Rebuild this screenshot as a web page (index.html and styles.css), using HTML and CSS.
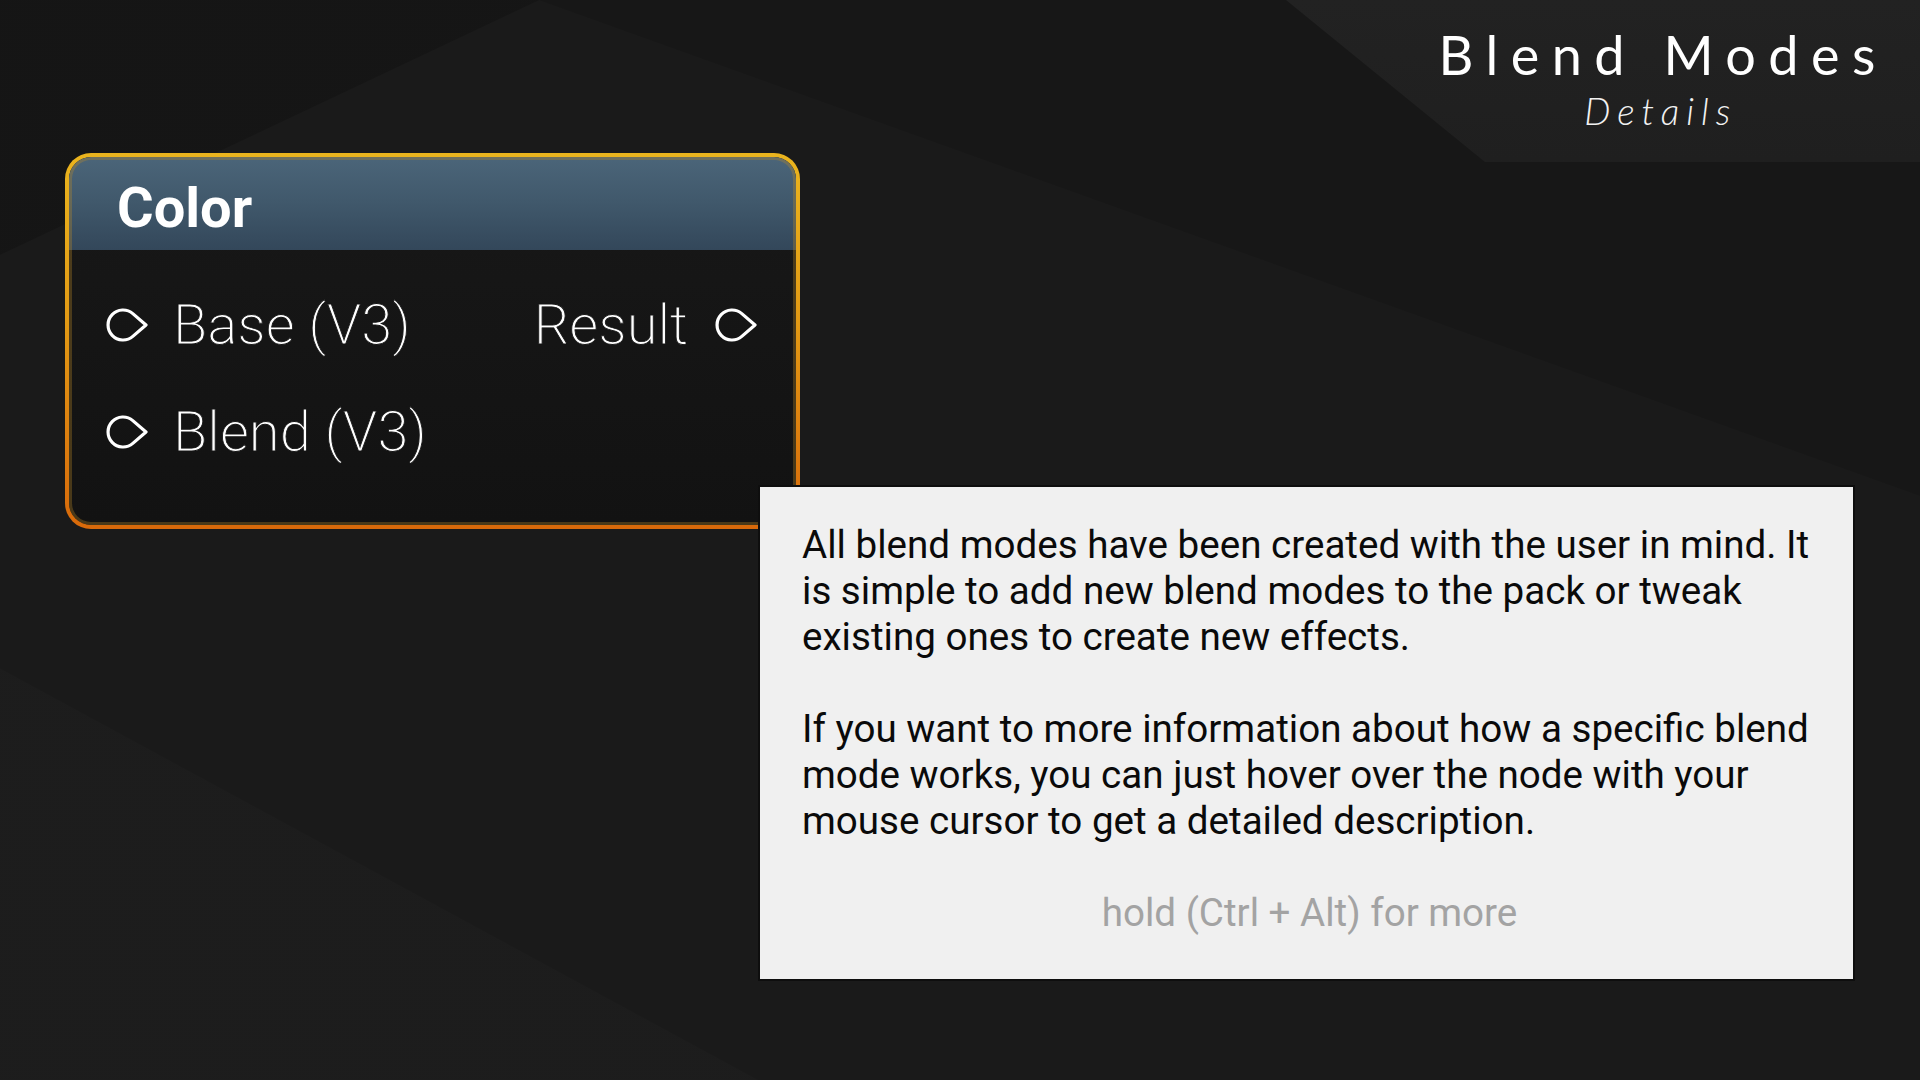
FILE: index.html
```html
<!DOCTYPE html>
<html lang="en">
<head>
<meta charset="utf-8">
<title>Blend Modes - Details</title>
<link rel="stylesheet" href="styles.css">
</head>
<body>
<div class="screen">
  <header class="title-block">
    <h1 class="title">Blend Modes</h1>
    <div class="subtitle">Details</div>
  </header>

  <div class="node">
    <div class="node-header">Color</div>
    <div class="node-body">
      <div class="row">
        <div class="port port-in">
          <svg class="port-icon" viewBox="0 0 42 34" width="42" height="34"><path d="M26.8 5.6 L40 17 L26.8 28.4 A15 15 0 1 1 26.8 5.6 Z"/></svg>
          <span class="port-label">Base (V3)</span>
        </div>
        <div class="port port-out">
          <span class="port-label">Result</span>
          <svg class="port-icon" viewBox="0 0 42 34" width="42" height="34"><path d="M26.8 5.6 L40 17 L26.8 28.4 A15 15 0 1 1 26.8 5.6 Z"/></svg>
        </div>
      </div>
      <div class="row">
        <div class="port port-in">
          <svg class="port-icon" viewBox="0 0 42 34" width="42" height="34"><path d="M26.8 5.6 L40 17 L26.8 28.4 A15 15 0 1 1 26.8 5.6 Z"/></svg>
          <span class="port-label">Blend (V3)</span>
        </div>
      </div>
    </div>
  </div>

  <div class="tooltip">
    <p class="tip-text">All blend modes have been created with the user in mind. It is simple to add new blend modes to the pack or tweak existing ones to create new effects.</p>
    <p class="tip-text">If you want to more information about how a specific blend mode works, you can just hover over the node with your mouse cursor to get a detailed description.</p>
    <p class="tip-hint">hold (Ctrl + Alt) for more</p>
  </div>
</div>
</body>
</html>
```

FILE: styles.css
```css
html, body {
  margin: 0;
  padding: 0;
}

body {
  width: 1920px;
  height: 1080px;
  overflow: hidden;
  background: #1a1a1a;
  font-family: Roboto, "Noto Sans", sans-serif;
}

.screen {
  position: relative;
  width: 1920px;
  height: 1080px;
  display: flex;
  flex-direction: column;
  background:
    linear-gradient(154.7deg, rgba(0,0,0,0.18) 0px, rgba(0,0,0,0.18) 230px, rgba(0,0,0,0) 231px),
    linear-gradient(19.75deg, rgba(0,0,0,0) 0px, rgba(0,0,0,0) 1198px, rgba(0,0,0,0.12) 1199px),
    linear-gradient(208.5deg, rgba(255,255,255,0) 0px, rgba(255,255,255,0) 1503px, rgba(255,255,255,0.012) 1504px),
    #1a1a1a;
  overflow: hidden;
}

.screen::before {
  content: "";
  position: absolute;
  top: 0;
  left: 1286px;
  width: 634px;
  height: 162px;
  background: linear-gradient(180deg, #222222, #1f1f1f);
  clip-path: polygon(0 0, 100% 0, 100% 100%, 199px 100%);
}

/* Title */
.title-block {
  position: relative;
  align-self: flex-end;
  margin-right: 44px;
  padding-top: 28px;
  display: flex;
  flex-direction: column;
  align-items: center;
  color: #ffffff;
  font-family: Lato, "Open Sans", sans-serif;
}

.title {
  margin: 0 -12px 0 0;
  font-size: 54px;
  line-height: 54px;
  font-weight: 400;
  letter-spacing: 12.5px;
}

.subtitle {
  margin: 10px -7px 0 0;
  font-size: 37px;
  line-height: 38px;
  font-style: italic;
  font-weight: 300;
  letter-spacing: 7px;
  color: #f2f2f2;
}

/* Node */
.node {
  margin: 23px 0 0 65px;
  width: 735px;
  height: 376px;
  box-sizing: border-box;
  border: 4px solid transparent;
  border-radius: 26px;
  background:
    linear-gradient(180deg, #181818, #121212) padding-box,
    linear-gradient(180deg, #eab41e 0%, #e39a14 45%, #d8690a 100%) border-box;
  display: flex;
  flex-direction: column;
  overflow: hidden;
  position: relative;
}

.node::after {
  content: "";
  position: absolute;
  inset: 0;
  border-radius: 22px;
  box-shadow: inset 0 0 0 3px rgba(190, 140, 40, 0.32);
  pointer-events: none;
}

.node-header {
  height: 93px;
  box-sizing: border-box;
  padding: 18px 0 0 48px;
  background: linear-gradient(180deg, #4b6579 0%, #40586b 50%, #33475a 100%);
  color: #ffffff;
  font-family: Roboto, sans-serif;
  font-weight: 700;
  font-size: 56px;
  line-height: normal;
}

.node-body {
  flex: 1;
  padding: 43px 39px 0 37px;
  display: flex;
  flex-direction: column;
  gap: 43px;
}

.row {
  display: flex;
  justify-content: space-between;
  align-items: center;
  height: 64px;
}

.port {
  display: flex;
  align-items: center;
  color: #ffffff;
}

.port-in {
  gap: 25px;
}

.port-out {
  gap: 27px;
}

.port-label {
  font-family: "Roboto Light", Roboto, sans-serif;
  font-weight: 300;
  font-size: 56px;
  line-height: 64px;
  -webkit-text-stroke: 0.9px #161616;
}

.port-icon {
  display: block;
  fill: none;
  stroke: #ffffff;
  stroke-width: 3.2;
  stroke-linejoin: round;
}

/* Tooltip */
.tooltip {
  position: absolute;
  left: 758px;
  top: 485px;
  width: 1097px;
  height: 496px;
  box-sizing: border-box;
  border: 2px solid #0e0e0e;
  background: #f0f0f0;
  padding: 35px 36px 0 42px;
  font-family: Roboto, sans-serif;
  font-size: 38.6px;
  line-height: 46px;
  color: #0a0a0a;
}

.tip-text {
  margin: 0 0 46px 0;
}

.tip-hint {
  margin: 0;
  text-align: center;
  color: #a3a3a3;
}
```
